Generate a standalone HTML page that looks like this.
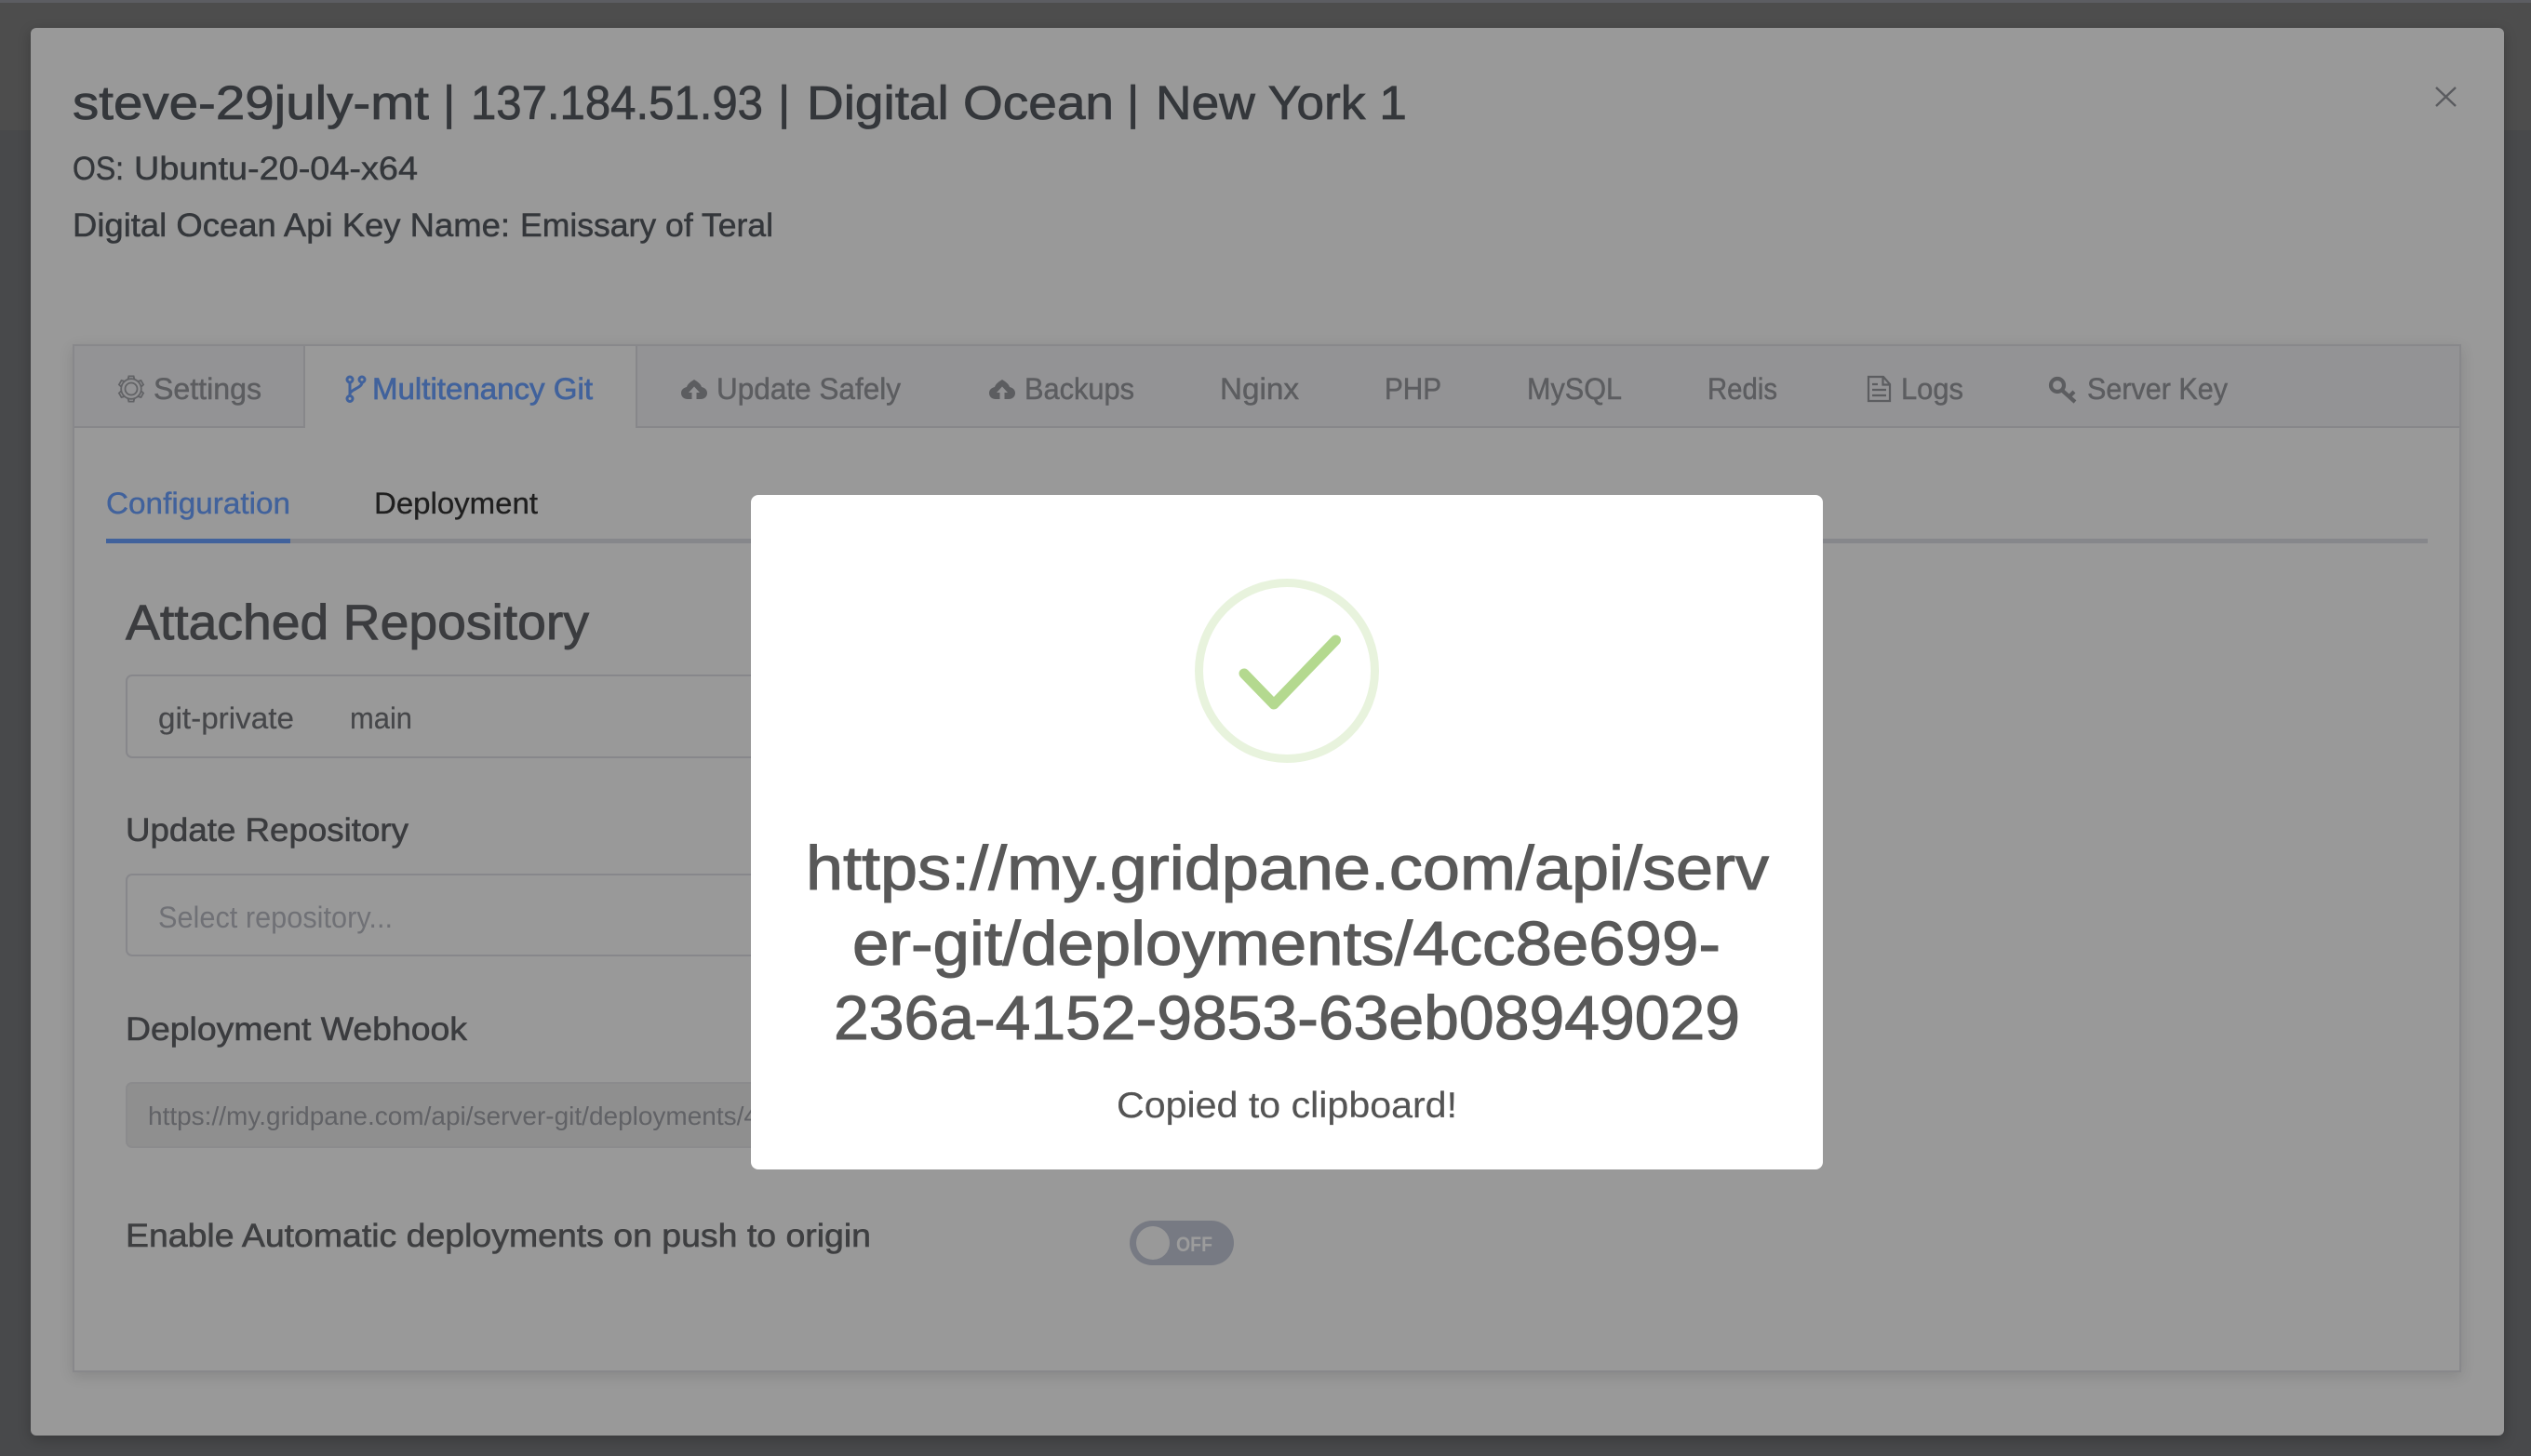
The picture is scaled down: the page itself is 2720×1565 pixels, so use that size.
<!DOCTYPE html>
<html lang="en">
<head>
<meta charset="utf-8">
<title>Server modal</title>
<style>
html,body{margin:0;padding:0;width:2720px;height:1565px;overflow:hidden;background:#48494b}
*{box-sizing:border-box}
.abs{position:absolute}
svg{position:absolute;left:0;top:0;overflow:visible}
text{font-family:"Liberation Sans",Arial,sans-serif}
</style>
</head>
<body>
<div class="abs" style="left:0;top:0;width:2720px;height:140px;background:#4d4d4d"></div>
<div class="abs" style="left:0;top:0;width:2720px;height:3px;background:#5c5d62"></div>

<!-- modal -->
<div class="abs" style="left:33px;top:30px;width:2658px;height:1513px;background:#999;border-radius:6px;box-shadow:0 4px 14px rgba(0,0,0,.22)"></div>

<!-- panel -->
<div class="abs" style="left:78px;top:370px;width:2567px;height:1105px;background:#999;border:2px solid #88888b;box-shadow:0 4px 14px rgba(0,0,0,.12)"></div>
<div class="abs" style="left:80px;top:372px;width:2563px;height:88px;background:#939395;border-bottom:2px solid #87878a"></div>
<div class="abs" style="left:326px;top:372px;width:359px;height:88px;background:#999;border-left:2px solid #87878a;border-right:2px solid #87878a"></div>

<!-- config tab line -->
<div class="abs" style="left:114px;top:579px;width:2495px;height:5px;background:#86878b"></div>
<div class="abs" style="left:114px;top:579px;width:198px;height:5px;background:#41629c"></div>

<!-- inputs -->
<div class="abs" style="left:135px;top:725px;width:1100px;height:90px;border:2px solid #87878b;border-radius:7px"></div>
<div class="abs" style="left:135px;top:939px;width:1100px;height:89px;border:2px solid #87878b;border-radius:7px"></div>
<div class="abs" style="left:135px;top:1163px;width:1100px;height:71px;background:#8f8f8f;border:2px solid #8b8b8d;border-radius:7px"></div>

<!-- toggle -->
<div class="abs" style="left:1214px;top:1312px;width:112px;height:48px;border-radius:24px;background:#777a83"></div>
<div class="abs" style="left:1221px;top:1318px;width:36px;height:36px;border-radius:50%;background:#999"></div>

<svg width="2720" height="1565" viewBox="0 0 2720 1565" xmlns="http://www.w3.org/2000/svg">
  <!-- Header -->
  <g font-size="51" fill="#34373b" stroke="#34373b" stroke-width=".8">
    <text x="78" y="128" textLength="383" lengthAdjust="spacingAndGlyphs">steve-29july-mt</text>
    <text x="476" y="128">|</text>
    <text x="506" y="128" textLength="314" lengthAdjust="spacingAndGlyphs">137.184.51.93</text>
    <text x="836" y="128">|</text>
    <text x="867" y="128" textLength="330" lengthAdjust="spacingAndGlyphs">Digital Ocean</text>
    <text x="1211" y="128">|</text>
    <text x="1242" y="128" textLength="270" lengthAdjust="spacingAndGlyphs">New York 1</text>
  </g>
  <g font-size="35" fill="#34373b" stroke="#34373b" stroke-width=".5">
    <text x="78" y="193" textLength="55" lengthAdjust="spacingAndGlyphs">OS:</text>
    <text x="144" y="193" textLength="305" lengthAdjust="spacingAndGlyphs">Ubuntu-20-04-x64</text>
    <text x="78" y="254" textLength="470" lengthAdjust="spacingAndGlyphs">Digital Ocean Api Key Name:</text>
    <text x="559" y="254" textLength="272" lengthAdjust="spacingAndGlyphs">Emissary of Teral</text>
  </g>
  <!-- close -->
  <path d="M2618 94 L2639 114 M2639 94 L2618 114" stroke="#5a5b5f" stroke-width="2.4" fill="none"/>

  <!-- Tabs -->
  <g font-size="32" fill="#5c5d60" stroke="#5c5d60" stroke-width=".5">
    <text x="165" y="429" textLength="116" lengthAdjust="spacingAndGlyphs">Settings</text>
    <text x="400" y="429" textLength="237" lengthAdjust="spacingAndGlyphs" fill="#41629c" stroke="#41629c" stroke-width=".7">Multitenancy Git</text>
    <text x="770" y="429" textLength="198" lengthAdjust="spacingAndGlyphs">Update Safely</text>
    <text x="1101" y="429" textLength="118" lengthAdjust="spacingAndGlyphs">Backups</text>
    <text x="1311" y="429" textLength="85" lengthAdjust="spacingAndGlyphs">Nginx</text>
    <text x="1488" y="429" textLength="61" lengthAdjust="spacingAndGlyphs">PHP</text>
    <text x="1641" y="429" textLength="102" lengthAdjust="spacingAndGlyphs">MySQL</text>
    <text x="1835" y="429" textLength="75" lengthAdjust="spacingAndGlyphs">Redis</text>
    <text x="2043" y="429" textLength="67" lengthAdjust="spacingAndGlyphs">Logs</text>
    <text x="2243" y="429" textLength="151" lengthAdjust="spacingAndGlyphs">Server Key</text>
  </g>

  <!-- gear -->
  <g transform="translate(141 418)" fill="none" stroke="#626366" stroke-width="1.8">
    <circle r="6.5"/>
    <circle r="10.8"/>
    <path d="M-3.4 -10.4 L-2.6 -13.6 H2.6 L3.4 -10.4"/>
    <path transform="rotate(60)" d="M-3.4 -10.4 L-2.6 -13.6 H2.6 L3.4 -10.4"/>
    <path transform="rotate(120)" d="M-3.4 -10.4 L-2.6 -13.6 H2.6 L3.4 -10.4"/>
    <path transform="rotate(180)" d="M-3.4 -10.4 L-2.6 -13.6 H2.6 L3.4 -10.4"/>
    <path transform="rotate(240)" d="M-3.4 -10.4 L-2.6 -13.6 H2.6 L3.4 -10.4"/>
    <path transform="rotate(300)" d="M-3.4 -10.4 L-2.6 -13.6 H2.6 L3.4 -10.4"/>
  </g>

  <!-- git branch -->
  <g fill="none" stroke="#41629c" stroke-width="3">
    <circle cx="376" cy="408" r="3"/>
    <circle cx="389" cy="408" r="3"/>
    <circle cx="376" cy="428.5" r="3"/>
    <path d="M376 411 V425.5 M389 411 C389 417 378 418 376 423"/>
  </g>

  <!-- cloud upload icons -->
  <path fill="#5c5d60" transform="translate(732 408)" d="M14 0C9.8 2.5 6.8 5 6 8C2.5 8.7 0 11 0 14.5C0 18.3 3 21 7 21H11.5V14H8L14 7.5L20 14H16.5V21H21C25 21 28 18.3 28 14.5C28 11 25.5 8.7 22 8C21.2 5 18.2 2.5 14 0Z"/>
  <path fill="#5c5d60" transform="translate(1063 408)" d="M14 0C9.8 2.5 6.8 5 6 8C2.5 8.7 0 11 0 14.5C0 18.3 3 21 7 21H11.5V14H8L14 7.5L20 14H16.5V21H21C25 21 28 18.3 28 14.5C28 11 25.5 8.7 22 8C21.2 5 18.2 2.5 14 0Z"/>

  <!-- logs doc -->
  <g fill="none" stroke="#5c5d60" stroke-width="2.2">
    <path d="M2008 405 H2024 L2031 413 V431 H2008 Z M2023.5 405 V413.5 H2031"/>
    <path d="M2012 413 H2018 M2012 419 H2027 M2012 425 H2027"/>
  </g>

  <!-- key -->
  <g fill="none" stroke="#5c5d60" stroke-width="4.2">
    <circle cx="2211" cy="414" r="7"/>
    <path d="M2216 419.5 L2230 432 M2224 426 L2229 421"/>
  </g>

  <!-- Sub tabs -->
  <text x="114" y="552" font-size="32" fill="#41629c" stroke="#41629c" stroke-width=".4" textLength="198" lengthAdjust="spacingAndGlyphs">Configuration</text>
  <text x="402" y="552" font-size="32" fill="#1f1f1f" stroke="#1f1f1f" stroke-width=".3" textLength="176" lengthAdjust="spacingAndGlyphs">Deployment</text>

  <!-- Form -->
  <text x="135" y="687" font-size="53" fill="#3b3c3f" stroke="#3b3c3f" stroke-width=".9" textLength="498" lengthAdjust="spacingAndGlyphs">Attached Repository</text>
  <text x="170" y="783" font-size="32" fill="#46474a" stroke="#46474a" stroke-width=".2" textLength="146" lengthAdjust="spacingAndGlyphs">git-private</text>
  <text x="376" y="783" font-size="32" fill="#46474a" stroke="#46474a" stroke-width=".2" textLength="67" lengthAdjust="spacingAndGlyphs">main</text>
  <text x="135" y="904" font-size="35" fill="#3b3c3f" stroke="#3b3c3f" stroke-width=".6" textLength="304" lengthAdjust="spacingAndGlyphs">Update Repository</text>
  <text x="170" y="997" font-size="32" fill="#707176" textLength="252" lengthAdjust="spacingAndGlyphs">Select repository...</text>
  <text x="135" y="1118" font-size="35" fill="#3b3c3f" stroke="#3b3c3f" stroke-width=".6" textLength="367" lengthAdjust="spacingAndGlyphs">Deployment Webhook</text>
  <text x="159" y="1209" font-size="28" fill="#616266" textLength="656" lengthAdjust="spacingAndGlyphs">https://my.gridpane.com/api/server-git/deployments/4</text>
  <text x="135" y="1340" font-size="35" fill="#3e3f41" stroke="#3e3f41" stroke-width=".6" textLength="801" lengthAdjust="spacingAndGlyphs">Enable Automatic deployments on push to origin</text>
  <text x="1264" y="1345" font-size="22" font-weight="bold" fill="#9c9c9c" textLength="39" lengthAdjust="spacingAndGlyphs">OFF</text>
</svg>

<!-- popup -->
<div class="abs" style="left:807px;top:532px;width:1152px;height:725px;background:#fff;border-radius:8px"></div>
<svg width="2720" height="1565" viewBox="0 0 2720 1565" xmlns="http://www.w3.org/2000/svg">
  <circle cx="1383" cy="721" r="94.5" fill="none" stroke="#e8f3dd" stroke-width="9"/>
  <path d="M1337 724 L1369 757 L1435.5 688" fill="none" stroke="#b4d98f" stroke-width="11" stroke-linecap="round" stroke-linejoin="round"/>
  <g font-size="67" fill="#595959" stroke="#595959" stroke-width="1.1">
    <text x="866" y="956" textLength="1035" lengthAdjust="spacingAndGlyphs">https://my.gridpane.com/api/serv</text>
    <text x="916" y="1037" textLength="933" lengthAdjust="spacingAndGlyphs">er-git/deployments/4cc8e699-</text>
    <text x="896" y="1117" textLength="974" lengthAdjust="spacingAndGlyphs">236a-4152-9853-63eb08949029</text>
  </g>
  <text x="1200" y="1201" font-size="39" fill="#545454" stroke="#545454" stroke-width=".2" textLength="366" lengthAdjust="spacingAndGlyphs">Copied to clipboard!</text>
</svg>
</body>
</html>
